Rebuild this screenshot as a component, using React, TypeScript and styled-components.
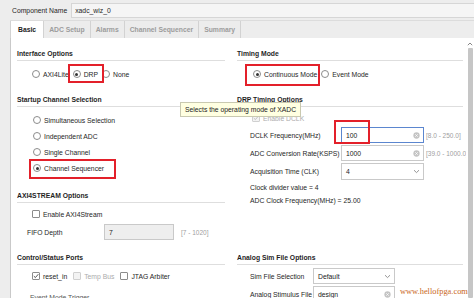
import React from 'react';
import styled, { createGlobalStyle } from 'styled-components';

const GlobalStyle = createGlobalStyle`
  html, body {
    margin: 0;
    padding: 0;
    background: #ededed;
  }
  body {
    font-family: 'Liberation Sans', Arial, sans-serif;
    font-size: 6.8px;
    color: #262626;
  }
`;

const Page = styled.div`
  position: relative;
  width: 474px;
  height: 298px;
  overflow: hidden;
  background: #ededed;
`;

const TopBar = styled.div`
  display: flex;
  align-items: center;
  height: 20px;
  padding-left: 12px;
  box-sizing: border-box;
`;

const NameField = styled.div`
  flex: 1;
  height: 15px;
  margin-left: 4px;
  padding-left: 3px;
  display: flex;
  align-items: center;
  background: #f5f5f5;
  border: 1px solid #d6d6d6;
  border-right: none;
  box-sizing: border-box;
`;

const TabBar = styled.div`
  display: flex;
  height: 18px;
  margin-left: 10px;
  border-top: 1px solid #dcdcdc;
  box-sizing: border-box;
`;

const Tab = styled.div<{ $active?: boolean; $last?: boolean }>`
  display: flex;
  align-items: center;
  padding: 0 ${(p) => (p.$active ? '7px' : '5px')};
  font-weight: 700;
  color: ${(p) => (p.$active ? '#222' : '#9c9c9c')};
  background: ${(p) => (p.$active ? '#fff' : '#ececec')};
  border-left: 1px solid #d2d2d2;
  border-right: ${(p) => (p.$last ? '1px solid #d2d2d2' : 'none')};
`;

const Panel = styled.div`
  display: flex;
  height: 260px;
  margin-left: 10px;
  background: #fff;
  border-left: 1px solid #c9c9c9;
`;

const Column = styled.div<{ $width: number; $right?: number }>`
  width: ${(p) => p.$width}px;
  padding: 10px ${(p) => p.$right ?? 3}px 0 6px;
  box-sizing: border-box;
  flex-shrink: 0;
  overflow: hidden;
`;

const Heading = styled.div<{ $gap?: number }>`
  height: 12px;
  line-height: 12px;
  margin-top: ${(p) => p.$gap ?? 0}px;
  margin-right: 3px;
  font-weight: 700;
  color: #1f1f1f;
  border-bottom: 1px solid #dedede;
`;

const Row = styled.div<{ $indent: number; $gap?: number; $height?: number; $spacing?: number }>`
  display: flex;
  align-items: center;
  height: ${(p) => p.$height ?? 16}px;
  margin-top: ${(p) => p.$gap ?? 0}px;
  padding-left: ${(p) => p.$indent}px;
  gap: ${(p) => p.$spacing ?? 4}px;
`;

const Option = styled.label<{ $disabled?: boolean }>`
  display: flex;
  align-items: center;
  gap: 3px;
  white-space: nowrap;
  color: ${(p) => (p.$disabled ? '#ababab' : '#262626')};
`;

const RadioDot = styled.span<{ $on?: boolean }>`
  width: 8px;
  height: 8px;
  border-radius: 50%;
  border: 1px solid #8c8c8c;
  box-sizing: border-box;
  background: #fff;
  display: flex;
  align-items: center;
  justify-content: center;
  &::after {
    content: '';
    width: 3px;
    height: 3px;
    border-radius: 50%;
    background: ${(p) => (p.$on ? '#333' : 'transparent')};
  }
`;

const CheckBox = styled.span<{ $disabled?: boolean }>`
  width: 8px;
  height: 8px;
  border-radius: 1px;
  border: 1px solid ${(p) => (p.$disabled ? '#d0d0d0' : '#8c8c8c')};
  background: ${(p) => (p.$disabled ? '#f3f3f3' : '#fff')};
  box-sizing: border-box;
  display: flex;
  align-items: center;
  justify-content: center;
  svg {
    display: block;
  }
`;

const FieldLabel = styled.span<{ $width: number }>`
  width: ${(p) => p.$width}px;
  flex-shrink: 0;
  white-space: nowrap;
`;

const Field = styled.div<{ $width: number; $focus?: boolean; $readonly?: boolean; $tall?: boolean }>`
  width: ${(p) => p.$width}px;
  height: ${(p) => (p.$tall ? 17 : 16)}px;
  flex-shrink: 0;
  display: flex;
  align-items: center;
  justify-content: space-between;
  padding: 0 3px 0 4px;
  box-sizing: border-box;
  border: 1px solid ${(p) => (p.$focus ? '#5b86cf' : '#c9c9c9')};
  background: ${(p) => (p.$readonly ? '#eeeeee' : '#fff')};
  color: #222;
`;

const Range = styled.span<{ $offset?: number }>`
  margin-left: ${(p) => p.$offset ?? 0}px;
  font-size: 6.5px;
  color: #a0a0a0;
  white-space: nowrap;
  flex-shrink: 0;
`;

const Note = styled.div<{ $indent: number; $gap?: number; $muted?: boolean }>`
  height: 13px;
  line-height: 13px;
  margin-top: ${(p) => p.$gap ?? 0}px;
  padding-left: ${(p) => p.$indent}px;
  white-space: nowrap;
  color: ${(p) => (p.$muted ? '#555' : '#262626')};
`;

const Scrollbar = styled.div`
  width: 8px;
  flex-shrink: 0;
  display: flex;
  flex-direction: column;
  align-items: center;
  padding-top: 4px;
  box-sizing: border-box;
`;

const Thumb = styled.div`
  width: 5px;
  flex: 1;
  margin-top: 2px;
  background: #c6c6c6;
  border-radius: 1px;
`;

const Tooltip = styled.div`
  position: absolute;
  left: 180px;
  top: 102px;
  height: 15px;
  padding: 0 4px;
  display: flex;
  align-items: center;
  background: #ffffe1;
  border: 1px solid #c9c9b0;
  box-sizing: border-box;
  white-space: nowrap;
  color: #222;
`;

const Mark = styled.div<{ $x: number; $y: number; $w: number; $h: number }>`
  position: absolute;
  left: ${(p) => p.$x}px;
  top: ${(p) => p.$y}px;
  width: ${(p) => p.$w}px;
  height: ${(p) => p.$h}px;
  border: 2px solid #e3202a;
  box-sizing: border-box;
`;

const Watermark = styled.div`
  position: absolute;
  left: 400px;
  top: 287px;
  font-family: 'Liberation Serif', 'Times New Roman', serif;
  font-size: 8.4px;
  color: #c9671c;
  white-space: nowrap;
`;

const Radio = ({ label, on, disabled }: { label: string; on?: boolean; disabled?: boolean }) => (
  <Option $disabled={disabled}>
    <RadioDot $on={on} />
    {label}
  </Option>
);

const Check = ({ label, on, disabled }: { label: string; on?: boolean; disabled?: boolean }) => (
  <Option $disabled={disabled}>
    <CheckBox $disabled={disabled}>
      {on && (
        <svg width='6' height='6' viewBox='0 0 6 6'>
          <path d='M0.8 3.1 L2.4 4.6 L5.3 1.2' fill='none' stroke={disabled ? '#bbb' : '#444'} strokeWidth='0.9' />
        </svg>
      )}
    </CheckBox>
    {label}
  </Option>
);

const ClearIcon = () => (
  <svg width='7' height='7' viewBox='0 0 8 8'>
    <circle cx='4' cy='4' r='3.6' fill='#c4c4c4' />
    <path d='M2.6 2.6 L5.4 5.4 M5.4 2.6 L2.6 5.4' stroke='#fff' strokeWidth='0.9' />
  </svg>
);

const Chevron = () => (
  <svg width='7' height='5' viewBox='0 0 7 5'>
    <path d='M1 1.2 L3.5 3.6 L6 1.2' fill='none' stroke='#888' strokeWidth='0.9' />
  </svg>
);

export default function App(): JSX.Element {
  return (
    <Page>
      <GlobalStyle />
      <TopBar>
        Component Name
        <NameField>xadc_wiz_0</NameField>
      </TopBar>
      <TabBar>
        <Tab $active>Basic</Tab>
        <Tab>ADC Setup</Tab>
        <Tab>Alarms</Tab>
        <Tab>Channel Sequencer</Tab>
        <Tab $last>Summary</Tab>
      </TabBar>
      <Panel>
        <Column $width={220}>
          <Heading>Interface Options</Heading>
          <Row $indent={15} $gap={6} $height={14}>
            <Radio label='AXI4Lite' />
            <Radio label='DRP' on />
            <Radio label='None' />
          </Row>
          <Heading $gap={13}>Startup Channel Selection</Heading>
          <Row $indent={16} $gap={5}>
            <Radio label='Simultaneous Selection' />
          </Row>
          <Row $indent={16}>
            <Radio label='Independent ADC' />
          </Row>
          <Row $indent={16}>
            <Radio label='Single Channel' />
          </Row>
          <Row $indent={16}>
            <Radio label='Channel Sequencer' on />
          </Row>
          <Heading $gap={14}>AXI4STREAM Options</Heading>
          <Row $indent={15} $gap={3}>
            <Check label='Enable AXI4Stream' />
          </Row>
          <Row $indent={10} $gap={2}>
            <FieldLabel $width={73}>FIFO Depth</FieldLabel>
            <Field $width={70} $readonly>7</Field>
            <Range $offset={3}>[7 - 1020]</Range>
          </Row>
          <Heading $gap={12}>Control/Status Ports</Heading>
          <Row $indent={15} $gap={3} $spacing={6}>
            <Check label='reset_in' on />
            <Check label='Temp Bus' disabled />
            <Check label='JTAG Arbiter' />
          </Row>
          <Note $indent={13} $gap={7} $muted>Event Mode Trigger</Note>
        </Column>
        <Column $width={235} $right={0}>
          <Heading>Timing Mode</Heading>
          <Row $indent={16} $gap={6} $height={14}>
            <Radio label='Continuous Mode' on />
            <Radio label='Event Mode' />
          </Row>
          <Heading $gap={13}>DRP Timing Options</Heading>
          <Row $indent={15} $gap={4} $height={14}>
            <Check label='Enable DCLK' on disabled />
          </Row>
          <Row $indent={13} $gap={2}>
            <FieldLabel $width={87}>DCLK Frequency(MHz)</FieldLabel>
            <Field $width={83} $focus>
              100
              <ClearIcon />
            </Field>
            <Range $offset={-2}>[8.0 - 250.0]</Range>
          </Row>
          <Row $indent={13} $gap={2}>
            <FieldLabel $width={87}>ADC Conversion Rate(KSPS)</FieldLabel>
            <Field $width={83}>
              1000
              <ClearIcon />
            </Field>
            <Range $offset={-2}>[39.0 - 1000.0]</Range>
          </Row>
          <Row $indent={13} $gap={2} $height={17}>
            <FieldLabel $width={87}>Acquisition Time (CLK)</FieldLabel>
            <Field $width={83} $tall>
              4
              <Chevron />
            </Field>
          </Row>
          <Note $indent={13} $gap={1}>Clock divider value = 4</Note>
          <Note $indent={13}>ADC Clock Frequency(MHz) = 25.00</Note>
          <Heading $gap={45}>Analog Sim File Options</Heading>
          <Row $indent={13} $gap={3}>
            <FieldLabel $width={59}>Sim File Selection</FieldLabel>
            <Field $width={82}>
              Default
              <Chevron />
            </Field>
          </Row>
          <Row $indent={13} $gap={2}>
            <FieldLabel $width={59}>Analog Stimulus File</FieldLabel>
            <Field $width={82}>
              design
              <ClearIcon />
            </Field>
          </Row>
        </Column>
        <Scrollbar>
          <svg width='6' height='4' viewBox='0 0 6 4'>
            <path d='M0.8 3.2 L3 1 L5.2 3.2' fill='none' stroke='#777' strokeWidth='0.9' />
          </svg>
          <Thumb />
        </Scrollbar>
      </Panel>
      <Tooltip>Selects the operating mode of XADC</Tooltip>
      <Mark $x={68} $y={64} $w={36} $h={19} />
      <Mark $x={245} $y={64} $w={75} $h={22} />
      <Mark $x={29} $y={159} $w={87} $h={20} />
      <Mark $x={334} $y={120} $w={36} $h={24} />
      <Watermark>www.hellofpga.com</Watermark>
    </Page>
  );
}
